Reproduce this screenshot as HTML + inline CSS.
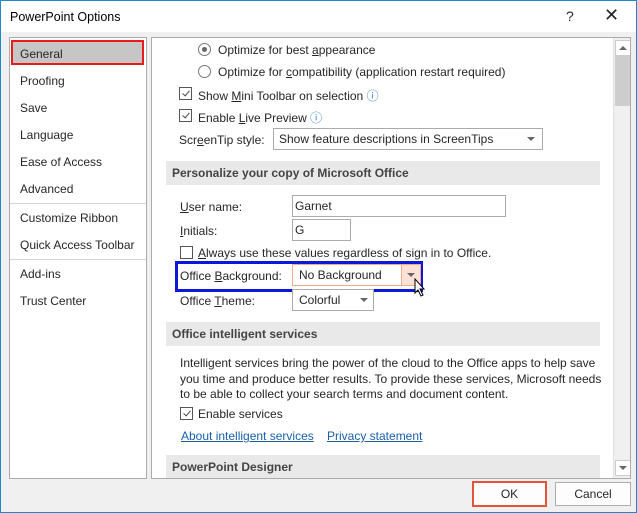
<!DOCTYPE html>
<html><head><style>
body{margin:0;width:637px;height:513px;overflow:hidden;font-family:"Liberation Sans",sans-serif;font-size:12px;color:#262626;}
.win{position:absolute;left:0;top:0;width:635px;height:511px;border:1px solid #1c89cf;background:#f0f0f0;}
.a{position:absolute;white-space:nowrap;}
.title{position:absolute;left:0;top:0;width:635px;height:31px;background:#fff;}
.nav{position:absolute;left:8px;top:36px;width:136px;height:440px;background:#fff;border:1px solid #ababab;}
.nav div{position:absolute;left:10px;}
.cont{position:absolute;left:150px;top:36px;width:478px;height:440px;background:#fff;border:1px solid #ababab;overflow:hidden;}
.hdr{position:absolute;left:14px;width:434px;height:24px;background:#e9e9e9;font-weight:bold;color:#444;}
.hdr span{position:absolute;left:6px;top:5px;}
.cb{position:absolute;width:11px;height:11px;border:1px solid #555;background:#fff;}
.cb.k::after{content:"";position:absolute;left:4px;top:1px;width:3px;height:6px;border:solid #444;border-width:0 1.5px 1.5px 0;transform:rotate(40deg);}
.rad{position:absolute;width:11px;height:11px;border:1px solid #777;border-radius:50%;background:#fff;}
.box{position:absolute;border:1px solid #ababab;background:#fff;}
.arr{position:absolute;width:0;height:0;border-left:4px solid transparent;border-right:4px solid transparent;border-top:4px solid #666;}
u{text-decoration:underline;}
.lnk{color:#1a5ea8;text-decoration:underline;}
</style></head><body><div class="win">
<div class="title"><div class="a" style="left:9px;top:9px;font-size:12.5px;color:#000">PowerPoint Options</div>
<div class="a" style="left:565px;top:7px;font-size:14px">?</div>
<div class="a" style="left:603px;top:4px;font-size:18px;font-weight:300">✕</div></div>
<div class="nav">
<div style="left:1px;top:2px;width:133px;height:25px;background:#c6c6c6;border:2px solid #e81b1b;box-sizing:border-box"></div>
<div style="top:9px">General</div><div style="top:36px">Proofing</div><div style="top:63px">Save</div><div style="top:90px">Language</div><div style="top:117px">Ease of Access</div><div style="top:144px">Advanced</div>
<div style="left:0;top:165px;width:136px;border-top:1px solid #d4d4d4"></div>
<div style="top:173px">Customize Ribbon</div><div style="top:200px">Quick Access Toolbar</div>
<div style="left:0;top:221px;width:136px;border-top:1px solid #d4d4d4"></div>
<div style="top:229px">Add-ins</div><div style="top:256px">Trust Center</div>
</div>
<div class="cont">
<div class="rad" style="left:46px;top:5px"><div style="position:absolute;left:3px;top:3px;width:5px;height:5px;border-radius:50%;background:#666"></div></div>
<div class="a" style="left:66px;top:5px">Optimize for best <u>a</u>ppearance</div>
<div class="rad" style="left:46px;top:27px"></div>
<div class="a" style="left:66px;top:27px">Optimize for <u>c</u>ompatibility (application restart required)</div>
<div class="cb k" style="left:27px;top:49px"></div><div class="a" style="left:46px;top:49px">Show <u>M</u>ini Toolbar on selection <span style="color:#2a7fd4">ⓘ</span></div>
<div class="cb k" style="left:27px;top:71px"></div><div class="a" style="left:46px;top:71px">Enable <u>L</u>ive Preview <span style="color:#2a7fd4">ⓘ</span></div>
<div class="a" style="left:27px;top:95px">Scr<u>e</u>enTip style:</div>
<div class="box" style="left:121px;top:90px;width:268px;height:20px"><span class="a" style="left:5px;top:3px">Show feature descriptions in ScreenTips</span><div class="arr" style="left:253px;top:8px"></div></div>
<div class="hdr" style="top:123px"><span>Personalize your copy of Microsoft Office</span></div>
<div class="a" style="left:28px;top:162px"><u>U</u>ser name:</div>
<div class="box" style="left:140px;top:157px;width:212px;height:20px"><span class="a" style="left:2px;top:3px">Garnet</span></div>
<div class="a" style="left:28px;top:186px"><u>I</u>nitials:</div>
<div class="box" style="left:140px;top:181px;width:57px;height:20px"><span class="a" style="left:2px;top:3px">G</span></div>
<div class="cb" style="left:28px;top:208px"></div><div class="a" style="left:46px;top:208px"><u>A</u>lways use these values regardless of sign in to Office.</div>
<div style="position:absolute;left:23px;top:223px;width:248px;height:31px;border:3px solid #0a18d8;box-sizing:border-box"></div>
<div class="a" style="left:28px;top:231px">Office <u>B</u>ackground:</div>
<div style="position:absolute;left:140px;top:226px;width:108px;height:20px;border:1px solid #f0a98a;background:#fff"><span class="a" style="left:6px;top:3px">No Background</span>
<div style="position:absolute;left:108px;top:-1px;width:18px;height:20px;border:1px solid #f0a98a;background:#fbe1d6"><div class="arr" style="left:5px;top:8px"></div></div></div>
<svg class="a" style="left:262px;top:240px" width="12" height="20" viewBox="0 0 12 20"><path d="M1 1 L1 15 L4 12 L7 18 L9 17 L6 11 L10 11 Z" fill="#fff" stroke="#000" stroke-width="1"/></svg>
<div class="a" style="left:28px;top:256px">Office <u>T</u>heme:</div>
<div class="box" style="left:140px;top:251px;width:80px;height:20px"><span class="a" style="left:6px;top:3px">Colorful</span><div class="arr" style="left:67px;top:8px"></div></div>
<div class="hdr" style="top:284px"><span>Office intelligent services</span></div>
<div class="a" style="left:28px;top:318px;line-height:15.5px">Intelligent services bring the power of the cloud to the Office apps to help save<br>you time and produce better results. To provide these services, Microsoft needs<br>to be able to collect your search terms and document content.</div>
<div class="cb k" style="left:28px;top:369px"></div><div class="a" style="left:46px;top:369px">Enable services</div>
<div class="a lnk" style="left:29px;top:391px">About intelligent services</div>
<div class="a lnk" style="left:175px;top:391px">Privacy statement</div>
<div class="hdr" style="top:417px"><span>PowerPoint Designer</span></div>
<div style="position:absolute;left:461px;top:0;width:17px;height:440px;background:#f0f0f0;border-left:1px solid #e0e0e0">
<div style="position:absolute;left:1px;top:2px;width:14px;height:14px;background:#fff;border:1px solid #ccc"><div style="position:absolute;left:3px;top:5px;border-left:4px solid transparent;border-right:4px solid transparent;border-bottom:4px solid #666"></div></div>
<div style="position:absolute;left:1px;top:18px;width:15px;height:50px;background:#cdcdcd"></div>
<div style="position:absolute;left:1px;top:422px;width:14px;height:14px;background:#fff;border:1px solid #ccc"><div class="arr" style="left:3px;top:5px"></div></div>
</div>
</div>
<div style="position:absolute;left:471px;top:480px;width:71px;height:22px;border:2px solid #e2553a;background:#fdfdfd;text-align:center;line-height:22px">OK</div>
<div style="position:absolute;left:554px;top:481px;width:74px;height:22px;border:1px solid #adadad;background:#fdfdfd;text-align:center;line-height:22px">Cancel</div>
</div></body></html>
